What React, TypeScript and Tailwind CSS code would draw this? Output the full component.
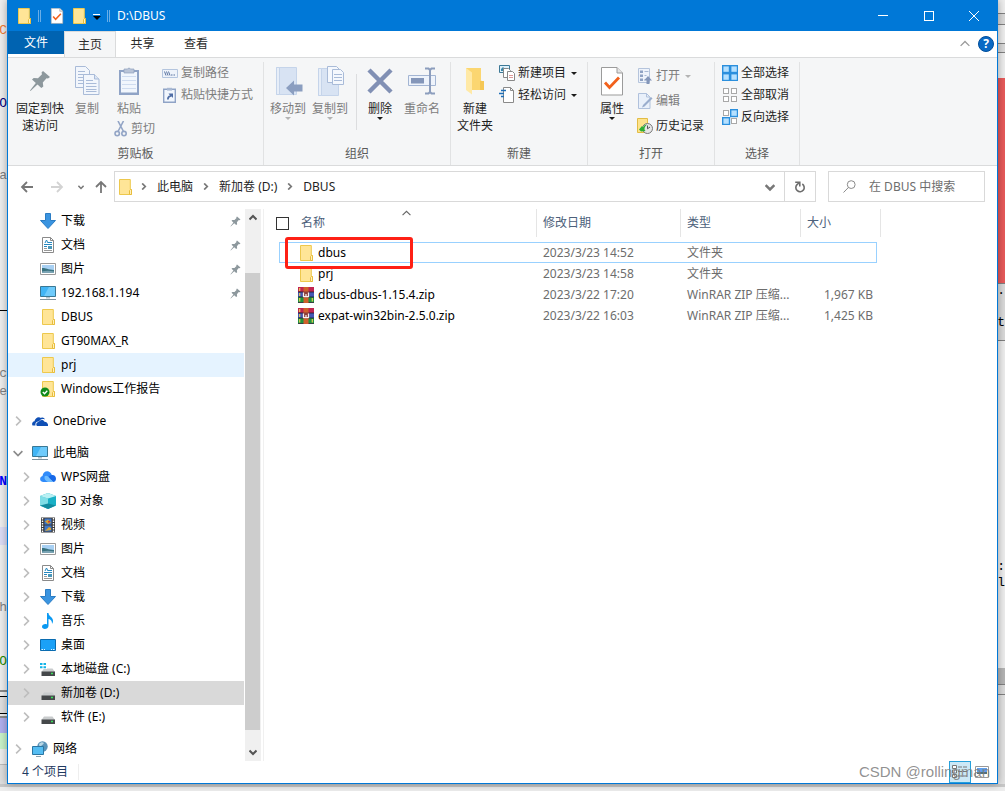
import React from "react";
import clsx from "clsx";

type IconProps = { className?: string };

/* ---------- icons ---------- */

const FolderIcon = ({ className = "w-4 h-4" }: IconProps) => (
    <svg viewBox="0 0 16 16" className={clsx("shrink-0", className)}>
        <path d="M2.5.5h10.800v10h1v5H2.500z" fill="#ffe597" stroke="#edc84d" />
        <path d="M12.500 15.500v-4l1-1h1v5z" fill="#fff0bd" stroke="#e8bd3c" />
    </svg>
);

const CheckDocIcon = ({ className = "w-6 h-[29px]" }: IconProps) => (
    <svg viewBox="0 0 24 29" className={clsx("shrink-0", className)}>
        <path d="M1.500.5h15.500l5.500 5.500v22h-21z" fill="#fff" stroke="#9b9b9b" />
        <path d="M17 .5v5.500h5.500" fill="#e4e4e4" stroke="#9b9b9b" />
        <path d="M5 15.500l4.500 5L19 10.500" fill="none" stroke="#f2611c" strokeWidth="2.800" />
    </svg>
);

const PinIcon = ({ className = "w-[22px] h-[22px]" }: IconProps) => (
    <svg viewBox="0 0 22 22" className={clsx("shrink-0", className)} fill="#8d989d">
        <path d="M14 1l7 6-2 1.500-1.500-.3-3.700 4.300.5 4-2 1.500L8.500 14.500 1.500 21 1 20.500l5.800-7.500L3 9.500 4.700 8l4.300.2 4-4L12.500 2.500z" />
    </svg>
);

const CopyIcon = () => (
    <svg viewBox="0 0 26 30" className="w-[26px] h-[30px]" fill="#f2f6fc" stroke="#a9bbd8">
        <path d="M1.500.5h10l4 4v17h-14z" />
        <path d="M4 5.500h7M4 8.500h9M4 11.500h9M4 14.500h9M4 17.500h9" />
        <path d="M9.500 8.500h11l4.500 4.500v15.500H9.500z" />
        <path d="M20.500 8.500V13H25" fill="#dce6f4" />
        <path d="M12 14.500h7M12 17.500h10.500M12 20.500h10.500M12 23.500h10.500M12 25.500h10.500" />
    </svg>
);

const PasteIcon = () => (
    <svg viewBox="0 0 22 30" className="w-[22px] h-[30px]">
        <path d="M1 4h20v25H1z" fill="#8fa3c6" />
        <path d="M3 6h16v20.500H3z" fill="#f1f6fd" />
        <path d="M4 10.500h14M4 14.500h14M4 18.500h14M4 22.500h14" stroke="#cfdcf0" />
        <path d="M6 3h3.500a1.700 1.700 0 013 0H16v4H6z" fill="#b9c4d8" stroke="#8fa0bd" strokeWidth=".7" />
    </svg>
);

const CutIcon = () => (
    <svg viewBox="0 0 14 16" className="w-[14px] h-4" fill="none" stroke="#93a5c6" strokeWidth="1.600">
        <path d="M4 0l5.500 10.500M9.500 0L4 10.500" />
        <circle cx="3.200" cy="12.600" r="2.200" />
        <circle cx="10" cy="12.600" r="2.200" />
    </svg>
);

const CopyPathIcon = () => (
    <svg viewBox="0 0 16 16" className="w-4 h-4">
        <path d="M.5 4.500h15v8H.5z" fill="#eef3fa" stroke="#b4c5de" />
        <path d="M2.500 6.500l1.500 4M4.500 6.500l1.500 4M6.500 6.500l1.500 4M9 10h1.500M11.500 10H13" stroke="#5872a0" />
    </svg>
);

const PasteShortcutIcon = () => (
    <svg viewBox="0 0 16 16" className="w-4 h-4">
        <path d="M1.700 2.200h11.600v13H1.700z" fill="#f1f6fd" stroke="#8fa3c6" strokeWidth="1.400" />
        <path d="M5 .8h5v2.800H5z" fill="#a9b9d3" />
        <path d="M5 12.500c0-2.500 1-3.800 3-4l-1.500-2h4.500v4.500l-1.300-1.500C7.500 9.800 6.800 11 6.800 12.500z" fill="#4f6da5" />
    </svg>
);

const MoveToIcon = () => (
    <svg viewBox="-2 0 30 30" className="w-[30px] h-[30px]">
        <path d="M1.500 1.500h20v27h-20z" fill="#d8e3f3" stroke="#c5d4ea" />
        <path d="M1.500 1.500h3v27h-3z" fill="#e7eef8" stroke="#c5d4ea" />
        <path d="M11 22l8-7.500v4h8.500v7H19v4z" fill="#8b9ec0" />
    </svg>
);

const CopyToIcon = () => (
    <svg viewBox="-2 0 30 31" className="w-[30px] h-[31px]">
        <path d="M1.500 2.500h20v27h-20z" fill="#d8e3f3" stroke="#c5d4ea" />
        <path d="M1.500 2.500h3v27h-3z" fill="#e7eef8" stroke="#c5d4ea" />
        <g fill="#f5f8fd" stroke="#a9bbd8">
            <path d="M10.500.5h9l3 3v13h-12z" />
            <path d="M15.500 3.500h8l3 3v12h-11z" />
            <path d="M17 8.500h8M17 11.500h8M17 14.500h8" />
        </g>
    </svg>
);

const DeleteIcon = () => (
    <svg viewBox="0 0 28 28" className="w-7 h-7" stroke="#8190b4" strokeWidth="4.500">
        <path d="M3 3l22 22M25 3L3 25" />
    </svg>
);

const RenameIcon = () => (
    <svg viewBox="0 0 30 28" className="w-[30px] h-7">
        <path d="M1.500 8.500h27v10h-27z" fill="#eef3fb" stroke="#a3b5d3" />
        <path d="M4 11h13v5.500H4z" fill="#8496b9" />
        <path d="M18 1.500h3.500l1.500 1.500 1.500-1.500H28M18 26.500h3.500l1.500-1.500 1.500 1.500H28M23 3v22" fill="none" stroke="#8c9dbd" strokeWidth="2" />
    </svg>
);

const NewFolderIcon = () => (
    <svg viewBox="0 0 20 28" className="w-5 h-7">
        <path d="M1 1h15v12.500l3 1.500v8H1z" fill="#fbd671" />
        <path d="M1 1l6 4.500v22L1 23z" fill="#ffe9a6" />
        <path d="M15 14h4v9h-4z" fill="#f5c755" />
    </svg>
);

const NewItemIcon = () => (
    <svg viewBox="0 0 16 16" className="w-4 h-4">
        <path d="M.5.500h10v7H.5z" fill="#dff1fb" stroke="#3c7896" />
        <path d="M2 4l2-2 2 2 2-1v3H2z" fill="#3987a8" />
        <path d="M4.500 3.500h5l2 2v7h-7z" fill="#fff" stroke="#888" />
        <path d="M8.500 6.500h5l2 2v7h-7z" fill="#fff" stroke="#888" />
        <path d="M10 10.500h4M10 12.500h4" stroke="#d99" />
    </svg>
);

const EasyAccessIcon = () => (
    <svg viewBox="0 0 16 16" className="w-4 h-4">
        <path d="M4.500.5h7l3 3v12h-10z" fill="#fff" stroke="#8a8a8a" />
        <path d="M11.500.5v3h3" fill="none" stroke="#8a8a8a" />
        <path d="M2 3.500h5M0 6.500h5M2 9.500h3" stroke="#1f6fb8" strokeWidth="1.400" />
    </svg>
);

const OpenIcon = () => (
    <svg viewBox="0 0 16 16" className="w-4 h-4">
        <path d="M1.500.500h11v14h-11z" fill="#eef3fb" stroke="#b5c4dc" />
        <path d="M3 2.500h3v2.500H3zM3 6.500h3V9H3zM3 10.500h3V13H3z" fill="#8fa2c3" />
        <path d="M7.500 3.500h4M7.500 7.500h2M7.500 11.500h1" stroke="#a9b9d3" />
        <path d="M11 8l4 4.500h-2.500V16h-3v-3.500H7z" fill="#8496b9" />
    </svg>
);

const EditIcon = () => (
    <svg viewBox="0 0 16 16" className="w-4 h-4">
        <path d="M1.500.5h8l3.500 3.500v11.500H1.500z" fill="#e9f0fa" stroke="#b0c1dc" />
        <path d="M9.500.5v3.500H13" fill="none" stroke="#b0c1dc" />
        <path d="M14 4l1.500 1.500-8 8-2.500 1 1-2.500z" fill="#9aadcd" />
    </svg>
);

const HistoryIcon = () => (
    <svg viewBox="0 0 16 16" className="w-4 h-4">
        <path d="M.5.500h10v14H.5z" fill="#fde38c" stroke="#e2bc45" />
        <circle cx="10.500" cy="10.500" r="5" fill="#e6e6e6" stroke="#7a7a7a" />
        <path d="M10.500 7.500v3.300l2.500-1.800" fill="none" stroke="#555" />
        <path d="M2 11.500l3-3.500 1 1.300c1-1.800 2-2.600 4-2.800-1.800 1.500-2.500 3-2.500 5l1 1.500-4.500.5z" fill="#2eaf35" />
    </svg>
);

const SelectIcon = ({ on }: { on: boolean[] }) => (
    <svg viewBox="0 0 16 16" className="w-4 h-4">
        {on.map((o, i) => (
            <rect
                key={i}
                x={(i % 2) * 8 + (o ? 0.7 : 1.5)}
                y={Math.floor(i / 2) * 8 + (o ? 0.7 : 1.5)}
                width={o ? 6.8 : 5}
                height={o ? 6.8 : 5}
                fill={o ? "#b5e0ff" : "#fff"}
                stroke={o ? "#2b8fdd" : "#a8a8a8"}
                strokeWidth={o ? 1.4 : 1}
            />
        ))}
    </svg>
);

const DownloadIcon = () => (
    <svg viewBox="0 0 16 16" className="w-4 h-4">
        <path d="M5.500.5h5v7h5L8 15.500.5 7.500h5z" fill="#3a94e0" stroke="#2a7cc4" />
    </svg>
);

const DocIcon = () => (
    <svg viewBox="0 0 16 16" className="w-4 h-4">
        <path d="M2.500.5h8l3 3v12h-11z" fill="#fff" stroke="#8a8a8a" />
        <path d="M10.500.5v3h3" fill="none" stroke="#8a8a8a" />
        <path d="M5 6l1.500-3L8 6M4 7.500h8M4 9.500h3M8 5.500h4" fill="none" stroke="#2487c0" />
        <path d="M4 11.500h3M4 13.500h8" stroke="#999" />
        <path d="M8 9h4v3H8z" fill="#4a96b8" />
    </svg>
);

const PictureIcon = () => (
    <svg viewBox="0 0 16 16" className="w-4 h-4">
        <path d="M.5 2.500h15v11H.5z" fill="#fff" stroke="#9a9a9a" />
        <path d="M2 4h12v8H2z" fill="#a8d0f3" />
        <path d="M2 7c3-.5 5 1.500 12 2v3H2z" fill="#3a7380" />
        <path d="M2 10.500c4-1 8-.8 12 0V12H2z" fill="#7ba4b4" />
    </svg>
);

const ComputerIcon = () => (
    <svg viewBox="0 0 16 16" className="w-4 h-4">
        <path d="M.5 1.500h15v10H.5z" fill="#41b5f5" stroke="#3a7894" />
        <path d="M9 2h6v9H4z" fill="#6fcbfb" />
        <path d="M6 12h4v1.500H6z" fill="#b6c4cb" />
        <path d="M0 14.500h16" stroke="#7d929d" />
    </svg>
);

const SyncedFolderIcon = () => (
    <svg viewBox="0 0 16 16" className="w-4 h-4">
        <path d="M2.500.5h10.800v10h1v5H2.500z" fill="#ffe597" stroke="#edc84d" />
        <path d="M12.500 15.500v-4l1-1h1v5z" fill="#fff0bd" stroke="#e8bd3c" />
        <circle cx="5" cy="11" r="4.500" fill="#118a1a" />
        <path d="M2.800 11l1.700 1.700 2.800-3" fill="none" stroke="#fff" strokeWidth="1.300" />
    </svg>
);

const OneDriveIcon = () => (
    <svg viewBox="0 0 16 16" className="w-4 h-4" fill="#0f4fb5">
        <path d="M.5 12.500c-1-2 0-4 2-4.300C3 5 6.500 3 9 5c1.500-1 3.500 0 4 1.500-3-1-5 0-6 2C4.500 8.200 3 10 3.500 12.500z" />
        <path d="M5 13c-1.500-1.500-.5-4 1.800-4 .7-2.500 4.700-3 5.700-.2 2 0 3 1.200 3.500 2.700V13z" />
    </svg>
);

const WpsCloudIcon = () => (
    <svg viewBox="0 0 16 16" className="w-4 h-4">
        <path d="M3 13C-1 12.500-.5 7.500 2.500 7 3 1.500 10 .5 11.800 6L10 13z" fill="#2f8bfa" />
        <path d="M10.500 6.500c3-1.500 5.500.5 5.500 3.200 0 2-1.200 3.300-3 3.300L8 8.500c.5-1 1.300-1.600 2.500-2z" fill="#1668e8" />
        <path d="M4.500 7.500C6 6 8 7 9 8.500l4 4.500H8C5.500 12 4 10 4.500 7.500z" fill="#6dbcff" />
    </svg>
);

const CubeIcon = () => (
    <svg viewBox="0 0 16 16" className="w-4 h-4">
        <path d="M0 3l8-3 8 3v9.500L8 16l-8-3.500z" fill="#19b0c6" />
        <path d="M0 3l8 2.500V16l-8-3.500z" fill="#7fdde6" />
        <path d="M0 3l8-3 8 3-8 2.500z" fill="#b9f0f3" />
        <path d="M0 12.500L8 10.500l8 2L8 16z" fill="#128a9e" />
    </svg>
);

const VideoIcon = () => (
    <svg viewBox="0 0 16 16" className="w-4 h-4">
        <path d="M1 .5h14v15H1z" fill="#3a3a3a" />
        <path d="M2.500 1v14M13.500 1v14" stroke="#fff" strokeWidth="1.400" strokeDasharray="1.500 1" />
        <path d="M4.500 1.500h7v6h-7zM4.500 8.500h7v6h-7z" fill="#3e76c9" />
        <path d="M5 4.500l3-2 3 3-3 1.500zM5 14l4-4 2 1v2z" fill="#d7a437" />
        <path d="M8 4h2v1.500H8z" fill="#c93a2f" />
    </svg>
);

const MusicIcon = () => (
    <svg viewBox="0 0 16 16" className="w-4 h-4" fill="#0a99f2">
        <path d="M7 0h1.500c0 3.500 5 4 4.500 8.500-.2 1.300-.7 2-1 2.500.2-3-1-4.500-3.500-5V13c0 3.500-6.500 4-6.500.8 0-2.300 3-3.300 5-2.300z" />
    </svg>
);

const DesktopIcon = () => (
    <svg viewBox="0 0 16 16" className="w-4 h-4">
        <path d="M.5 2.500h15v11H.5z" fill="#1ba1f7" stroke="#0a6cb0" />
        <path d="M1.500 12.500h1.500M4 12.500h1M11 12.500h1M13 12.500h1.500" stroke="#e6f6ff" />
    </svg>
);

const DriveIcon = ({ system }: { system?: boolean }) => (
    <svg viewBox="0 0 16 16" className="w-4 h-4">
        <path d="M4 7.500h8.500L15 11H1.500z" fill="#c9cccd" />
        <path d="M1.500 10.500H15V15H1.500z" fill="#45484a" />
        <path d="M11 12.500h2" stroke="#39e05a" strokeWidth="1.400" />
        {system && (
            <>
                <path d="M0 1h7v7H0z" fill="#fff" />
                <path d="M0 2h2.500v2H0zM3.500 2H6v2H3.500zM0 5.200h2.500v2H0zM3.500 5.200H6v2H3.500z" fill="#12b4e8" />
            </>
        )}
    </svg>
);

const NetworkIcon = () => (
    <svg viewBox="0 0 16 16" className="w-4 h-4">
        <circle cx="10.500" cy="5.500" r="5.200" fill="#5a93b8" />
        <path d="M7 3c2-2.500 4-2 5-1-1 2-3 2-3 4-1.500 0-2-1.500-2-3z" fill="#b9d7e5" />
        <path d="M.5 5.500h11v8H.5z" fill="#55bdf2" stroke="#2b76a3" />
        <path d="M4 15.500h5" stroke="#8aa1ad" />
    </svg>
);

const RarIcon = () => (
    <svg viewBox="0 0 16 16" className="w-4 h-4 shrink-0">
        <path d="M0 0h16v5H0z" fill="#c22450" />
        <path d="M0 5h16v5H0z" fill="#4458b4" />
        <path d="M0 10h16v5.500H0z" fill="#1f9440" />
        <path d="M0 5h16M0 10h16M0 15.500h16" stroke="#1d1d2c" strokeWidth=".8" />
        <path d="M5.500 0h5v5.500h-5zM5.500 10h5v6h-5z" fill="#d0602c" />
        <path d="M1.700 1v3M1.700 6v3M1.700 11v3.500M14.300 11v3.500" stroke="#eccb55" strokeWidth="1.200" />
        <path d="M4.800 4.500h6.400v6H4.800z" fill="#8e3f3a" />
        <path d="M5.500 10V5.500M8 7v3M10.500 10V5.500M5.500 9.700h5" fill="none" stroke="#f8f4f2" strokeWidth="1.200" />
    </svg>
);

type Dir = "right" | "down" | "up";
const Chevron = ({ dir, size = 8, color = "#777", weight = 1.5 }: { dir: Dir; size?: number; color?: string; weight?: number }) => {
    const d = { right: "M2.500 0.500L6 4 2.500 7.500", down: "M0.500 2.500L4 6 7.500 2.500", up: "M0.500 5.500L4 2 7.500 5.500" }[dir];
    return (
        <svg viewBox="0 0 8 8" width={size} height={size} className="shrink-0" fill="none" stroke={color} strokeWidth={weight}>
            <path d={d} />
        </svg>
    );
};

const Caret = ({ muted }: { muted?: boolean }) => (
    <svg viewBox="0 0 6 3" className="w-[6px] h-[3px] shrink-0">
        <path d="M0 0h6L3 3z" fill={muted ? "#b3b3b3" : "#1b1b1b"} />
    </svg>
);

const Arrow = ({ dir, color = "#777777" }: { dir: "left" | "right" | "up"; color?: string }) => {
    const d = {
        left: "M13 7H2M7 2L2 7l5 5",
        right: "M1 7h11M7 2l5 5-5 5",
        up: "M7 13V2M2 7l5-5 5 5",
    }[dir];
    return (
        <svg viewBox="0 0 14 14" className="w-[14px] h-[14px]" fill="none" stroke={color} strokeWidth="1.800">
            <path d={d} />
        </svg>
    );
};

/* ---------- ribbon ---------- */

type ButtonProps = {
    icon: React.ReactNode;
    label: string;
    muted?: boolean;
    caret?: boolean;
    width?: string;
};

const TallButton = ({ icon, label, muted, caret, width = "w-[42px]" }: ButtonProps) => (
    <button className={clsx("flex flex-col items-center leading-[17px]", width, muted ? "text-[#7d7d7d]" : "text-[#1e1e1e]")}>
        <span className="flex h-[38px] items-center">{icon}</span>
        <span className="whitespace-pre">{label}</span>
        {caret && <Caret muted={muted} />}
    </button>
);

const SmallButton = ({ icon, label, muted, caret }: ButtonProps) => (
    <button className={clsx("flex items-center gap-[3px] h-[22px] whitespace-nowrap", muted ? "text-[#7d7d7d]" : "text-[#1e1e1e]")}>
        {icon}
        <span>{label}</span>
        {caret && <span className="pl-[2px]"><Caret muted={muted} /></span>}
    </button>
);

const Group = ({ title, className, children }: { title: string; className?: string; children: React.ReactNode }) => (
    <section className={clsx("flex flex-col border-r border-[#e1e2e3]", className)}>
        <div className="flex h-[83px]">{children}</div>
        <h2 className="h-5 text-center leading-[18px] text-[#5a5a5a]">{title}</h2>
    </section>
);

const Ribbon = () => (
    <div className="flex border-y border-[#dadbdc] bg-[#f5f6f7] pt-1">
        <Group title="剪贴板" className="w-[256px]">
            <TallButton icon={<PinIcon />} label={"固定到快\n速访问"} width="w-16" />
            <TallButton icon={<CopyIcon />} label="复制" muted width="w-[30px]" />
            <div className="flex flex-col items-start pl-[6px]">
                <TallButton icon={<PasteIcon />} label="粘贴" muted width="w-[42px]" />
                <div className="pl-[6px] pt-px"><SmallButton icon={<CutIcon />} label="剪切" muted /></div>
            </div>
            <div className="flex flex-col items-start pl-[7px]">
                <SmallButton icon={<CopyPathIcon />} label="复制路径" muted />
                <SmallButton icon={<PasteShortcutIcon />} label="粘贴快捷方式" muted />
            </div>
        </Group>
        <Group title="组织" className="w-[187px]">
            <div className="flex pl-[3px]">
                <TallButton icon={<MoveToIcon />} label="移动到" muted caret />
                <TallButton icon={<CopyToIcon />} label="复制到" muted caret />
                <div className="mx-[5px] mt-3 h-14 w-px bg-[#dcdddf]" />
                <TallButton icon={<DeleteIcon />} label="删除" caret width="w-9" />
                <TallButton icon={<RenameIcon />} label="重命名" muted width="w-12" />
            </div>
        </Group>
        <Group title="新建" className="w-[137px]">
            <TallButton icon={<NewFolderIcon />} label={"新建\n文件夹"} width="w-12" />
            <div className="flex flex-col">
                <SmallButton icon={<NewItemIcon />} label="新建项目" caret />
                <SmallButton icon={<EasyAccessIcon />} label="轻松访问" caret />
            </div>
        </Group>
        <Group title="打开" className="w-[127px]">
            <TallButton icon={<CheckDocIcon />} label="属性" caret width="w-12" />
            <div className="flex flex-col gap-[3px] pl-px pt-[3px]">
                <SmallButton icon={<OpenIcon />} label="打开" muted caret />
                <SmallButton icon={<EditIcon />} label="编辑" muted />
                <SmallButton icon={<HistoryIcon />} label="历史记录" />
            </div>
        </Group>
        <Group title="选择" className="w-[85px]">
            <div className="flex flex-col pl-[7px]">
                <SmallButton icon={<SelectIcon on={[true, true, true, true]} />} label="全部选择" />
                <SmallButton icon={<SelectIcon on={[false, false, false, false]} />} label="全部取消" />
                <SmallButton icon={<SelectIcon on={[false, true, true, false]} />} label="反向选择" />
            </div>
        </Group>
    </div>
);

/* ---------- title bar, tabs, address bar ---------- */

const TitleBar = () => (
    <header className="flex h-[31px] items-center bg-[#0078d7] pl-2 text-white">
        <FolderIcon className="h-4 w-4" />
        <span className="ml-[6px] h-3 w-[3px] border-x border-[#69aee8]" />
        <button className="ml-[6px] flex w-5 justify-center" aria-label="属性"><CheckDocIcon className="h-4 w-[14px]" /></button>
        <button className="ml-1 flex w-4" aria-label="新建文件夹"><FolderIcon className="h-4 w-4" /></button>
        <button className="ml-[6px] flex w-[7px] flex-col items-center gap-px pt-[2px]" aria-label="自定义快速访问工具栏">
            <span className="h-px w-[7px] bg-white" />
            <svg viewBox="0 0 8 4" className="h-1 w-2"><path d="M0 0h8L4 4z" fill="#000" /></svg>
        </button>
        <span className="ml-[7px] h-3 w-[3px] border-x border-[#69aee8]" />
        <h1 className="ml-[7px] flex-1">D:\DBUS</h1>
        <button className="flex h-full w-[46px] items-center justify-center" aria-label="最小化"><span className="h-px w-[10px] bg-white" /></button>
        <button className="flex h-full w-[45px] items-center justify-center" aria-label="最大化"><span className="h-[10px] w-[10px] border border-white" /></button>
        <button className="flex h-full w-[46px] items-center justify-center" aria-label="关闭">
            <svg viewBox="0 0 10 10" className="h-[10px] w-[10px]" stroke="#fff"><path d="M0 0l10 10M10 0L0 10" /></svg>
        </button>
    </header>
);

const Tabs = () => (
    <nav className="flex h-[26px] text-[#2b2b2b]">
        <button className="h-[23px] w-14 bg-[#0063b1] text-white">文件</button>
        <button className="-mb-px h-[27px] w-[52px] border border-b-0 border-[#dadbdc] bg-[#f5f6f7]">主页</button>
        <button className="w-[53px]">共享</button>
        <button className="w-[54px]">查看</button>
        <div className="ml-auto flex items-center gap-2 pr-[3px]">
            <button aria-label="最小化功能区"><Chevron dir="up" size={10} color="#999" weight={1} /></button>
            <button aria-label="帮助" className="flex h-4 w-4 items-center justify-center rounded-full border border-[#004e9b] bg-[#0a69c4] font-bold text-white">?</button>
        </div>
    </nav>
);

const AddressBar = () => (
    <div className="flex items-center px-3 pt-[5px] pb-[7px]">
        <button aria-label="后退"><Arrow dir="left" /></button>
        <button className="ml-4" aria-label="前进"><Arrow dir="right" color="#d3d3d3" /></button>
        <button className="ml-[14px]" aria-label="最近浏览的位置"><Chevron dir="down" size={6} color="#777" weight={2} /></button>
        <button className="ml-[10px]" aria-label="上移"><Arrow dir="up" /></button>
        <div className="ml-[6px] flex h-[31px] flex-1 border border-[#d9d9d9] text-[#1e1e1e]">
            <ol className="flex flex-1 items-center gap-[10px] pl-[2px]">
                <li className="flex items-center gap-[7px]"><FolderIcon className="h-4 w-4" /><Chevron dir="right" size={7} weight={2} /></li>
                <li className="flex items-center gap-[9px]"><a href="#pc">此电脑</a><Chevron dir="right" size={7} weight={2} /></li>
                <li className="flex items-center gap-[9px]"><a href="#d">新加卷 (D:)</a><Chevron dir="right" size={7} weight={2} /></li>
                <li><a href="#dbus">DBUS</a></li>
            </ol>
            <button className="flex w-7 items-center justify-center" aria-label="以前的位置"><Chevron dir="down" size={10} color="#777" weight={2} /></button>
            <button className="flex w-[31px] items-center justify-center border-l border-[#d9d9d9]" aria-label="刷新">
                <svg viewBox="0 0 12 12" className="h-3 w-3" fill="none" stroke="#6d6d6d" strokeWidth="1.600">
                    <path d="M8.300 3A4.200 4.200 0 113 3.600L5.500 1.500M1.200 1.300h4.600v4.200" />
                </svg>
            </button>
        </div>
        <label className="ml-3 flex h-[31px] w-[157px] items-center gap-[13px] border border-[#d9d9d9] pl-[14px]">
            <svg viewBox="0 0 13 13" className="h-[13px] w-[13px] shrink-0" fill="none" stroke="#8a8a8a">
                <circle cx="8.200" cy="4.600" r="3.900" />
                <path d="M5.400 7.500L.5 12.500" />
            </svg>
            <input className="w-full min-w-0 outline-none placeholder:text-[#6d6d6d]" placeholder="在 DBUS 中搜索" aria-label="搜索" />
        </label>
    </div>
);

/* ---------- navigation pane ---------- */

type NavItem = {
    label: string;
    icon: React.ReactNode;
    depth?: 0 | 1;
    arrow?: Dir;
    pinned?: boolean;
    state?: "hover" | "selected";
};

const navSections: NavItem[][] = [
    [
        { label: "下载", icon: <DownloadIcon />, pinned: true },
        { label: "文档", icon: <DocIcon />, pinned: true },
        { label: "图片", icon: <PictureIcon />, pinned: true },
        { label: "192.168.1.194", icon: <ComputerIcon />, pinned: true },
        { label: "DBUS", icon: <FolderIcon /> },
        { label: "GT90MAX_R", icon: <FolderIcon /> },
        { label: "prj", icon: <FolderIcon />, state: "hover" },
        { label: "Windows工作报告", icon: <SyncedFolderIcon /> },
    ],
    [{ label: "OneDrive", icon: <OneDriveIcon />, depth: 0, arrow: "right" }],
    [
        { label: "此电脑", icon: <ComputerIcon />, depth: 0, arrow: "down" },
        { label: "WPS网盘", icon: <WpsCloudIcon />, arrow: "right" },
        { label: "3D 对象", icon: <CubeIcon />, arrow: "right" },
        { label: "视频", icon: <VideoIcon />, arrow: "right" },
        { label: "图片", icon: <PictureIcon />, arrow: "right" },
        { label: "文档", icon: <DocIcon />, arrow: "right" },
        { label: "下载", icon: <DownloadIcon />, arrow: "right" },
        { label: "音乐", icon: <MusicIcon />, arrow: "right" },
        { label: "桌面", icon: <DesktopIcon />, arrow: "right" },
        { label: "本地磁盘 (C:)", icon: <DriveIcon system />, arrow: "right" },
        { label: "新加卷 (D:)", icon: <DriveIcon />, arrow: "right", state: "selected" },
        { label: "软件 (E:)", icon: <DriveIcon />, arrow: "right" },
    ],
    [{ label: "网络", icon: <NetworkIcon />, depth: 0, arrow: "right" }],
];

const NavRow = ({ label, icon, depth = 1, arrow, pinned, state }: NavItem) => (
    <a
        href="#nav"
        className={clsx(
            "flex h-6 items-center pr-[3px]",
            depth === 0 ? "pl-[5px]" : "pl-[13px]",
            state === "hover" && "bg-[#e5f3ff]",
            state === "selected" && "bg-[#d9d9d9]"
        )}
    >
        <span className="flex w-[19px] items-center">
            {arrow && <Chevron dir={arrow} size={10} color={arrow === "down" ? "#8a8a8a" : "#bdbdbd"} weight={1.3} />}
        </span>
        {icon}
        <span className="flex-1 pl-[5px]">{label}</span>
        {pinned && <PinIcon className="h-[11px] w-[11px]" />}
    </a>
);

const NavPane = () => (
    <aside className="flex border-r border-[#f0f0f0] pr-[2px] text-black">
        <div className="flex w-[236px] flex-col gap-2">
            {navSections.map((items, i) => (
                <div key={i}>
                    {items.map((item) => <NavRow key={item.label} {...item} />)}
                </div>
            ))}
        </div>
        <div className="ml-px flex w-4 flex-col bg-[#f0f0f0]">
            <button className="flex h-[18px] items-center justify-center" aria-label="向上滚动"><Chevron dir="up" size={8} color="#555" weight={2} /></button>
            <div className="flex flex-1 flex-col pt-[46px] pb-[13px]"><div className="w-[15px] flex-1 bg-[#cdcdcd]" /></div>
            <button className="flex h-[18px] items-center justify-center" aria-label="向下滚动"><Chevron dir="down" size={8} color="#555" weight={2} /></button>
        </div>
    </aside>
);

/* ---------- file list ---------- */

const files = [
    { name: "dbus", date: "2023/3/23 14:52", type: "文件夹", size: "", marked: true },
    { name: "prj", date: "2023/3/23 14:58", type: "文件夹", size: "" },
    { name: "dbus-dbus-1.15.4.zip", date: "2023/3/22 17:20", type: "WinRAR ZIP 压缩...", size: "1,967 KB" },
    { name: "expat-win32bin-2.5.0.zip", date: "2023/3/22 16:03", type: "WinRAR ZIP 压缩...", size: "1,425 KB" },
];

const FileList = () => (
    <main className="flex-1 pl-[15px]">
        <table className="w-[598px] table-fixed border-collapse text-left">
            <thead className="text-[#4c607a]">
                <tr className="h-[33px] align-top">
                    <th className="w-[258px] font-normal">
                        <div className="-ml-[3px] flex h-7 items-center gap-3 border-r border-[#e5e5e5]">
                            <input type="checkbox" aria-label="全选" className="h-[13px] w-[13px] appearance-none border border-[#333] bg-white" />
                            <span className="w-[89px]">名称</span>
                            <span className="self-start"><Chevron dir="up" size={9} color="#666" weight={1} /></span>
                        </div>
                    </th>
                    <th className="w-[144px] font-normal"><div className="h-7 border-r border-[#e5e5e5] pl-[6px] leading-7">修改日期</div></th>
                    <th className="w-[120px] font-normal"><div className="h-7 border-r border-[#e5e5e5] pl-[6px] leading-7">类型</div></th>
                    <th className="w-[76px] font-normal"><div className="h-7 w-20 border-r border-[#e5e5e5] pl-[6px] leading-7">大小</div></th>
                </tr>
            </thead>
            <tbody className="text-[#6d6d6d]">
                {files.map((f) => (
                    <tr key={f.name} className={clsx("h-[21px]", f.marked && "outline-1 -outline-offset-1 outline-[#99d1ff]")}>
                        <td className="relative">
                            <div className="flex items-center gap-1 pl-[19px] text-black">
                                {f.name.endsWith(".zip") ? <RarIcon /> : <FolderIcon />}
                                {f.name}
                            </div>
                            {f.marked && <div className="absolute -top-[5px] left-[6px] z-10 h-8 w-32 rounded-[3px] border-3 border-[#fe2015]" />}
                        </td>
                        <td className="pl-[6px]">{f.date}</td>
                        <td className="pl-[6px] whitespace-nowrap">{f.type}</td>
                        <td className="pr-1 text-right">{f.size}</td>
                    </tr>
                ))}
            </tbody>
        </table>
    </main>
);

const StatusBar = () => (
    <footer className="relative flex h-[22px] items-center pl-[14px] pr-2 text-[#1f3a5f]">
        <span className="border-r border-[#eee] pr-[10px]">4 个项目</span>
        <button className="ml-auto flex h-full w-[22px] items-center justify-center border border-[#26a0da] bg-[#cce8f6]" aria-label="详细信息">
            <svg viewBox="0 0 16 14" className="h-[14px] w-4" fill="none" stroke="#777">
                <path d="M.5.500h4v3h-4zM.5 5h4v3h-4zM.5 9.500h4v3h-4z" fill="#fff" />
                <path d="M6 2h4M11 2h4M6 6.500h4M11 6.500h4M6 11h4M11 11h4" />
            </svg>
        </button>
        <button className="ml-1" aria-label="大图标">
            <svg viewBox="0 0 14 12" className="h-3 w-[14px]">
                <path d="M.5.500h13v11H.5z" fill="#fff" stroke="#999" />
                <path d="M2 2h10v4H2z" fill="#5f9fee" />
                <path d="M2 6h10v2H2z" fill="#51707c" />
            </svg>
        </button>
        <span className="absolute right-[7px] bottom-0 font-['Liberation_Sans',sans-serif] text-[15px] leading-[22px] text-[#7d7d7d]/85">CSDN @rollingman</span>
    </footer>
);

/* ---------- windows behind, seen past the edges ---------- */

type Strip = { h: string; look?: string; text?: string };

const leftStrips: Strip[] = [
    { h: "h-6" },
    { h: "h-[14px]", look: "text-[#f07830]", text: "C" },
    { h: "h-[59px]" },
    { h: "h-[14px]", look: "text-[#000080]", text: "O" },
    { h: "h-[58px]" },
    { h: "h-[14px]", look: "text-[#808080]", text: "a" },
    { h: "h-32", look: "border-b border-black" },
    { h: "h-14" },
    { h: "h-[18px]", look: "text-[#808080]", text: "c" },
    { h: "h-[14px]", look: "text-[#808080]", text: "e" },
    { h: "h-[76px]" },
    { h: "h-[14px]", look: "font-bold text-[#0000ff]", text: "N" },
    { h: "h-[38px]" },
    { h: "h-[18px]", look: "bg-[#dcdcf5]" },
    { h: "h-14" },
    { h: "h-[14px]", look: "text-[#808080]", text: "h" },
    { h: "h-10" },
    { h: "h-[14px]", look: "text-[#228b00]", text: "O" },
    { h: "h-[23px]", look: "border-b-2 border-[#8a8a8a]" },
    { h: "h-[5px]", look: "border-b border-black" },
    { h: "h-[17px]", look: "bg-[#e0e0e0] border-b border-black" },
    { h: "h-1", look: "border-b-2 border-[#8a8a8a]" },
    { h: "h-[15px]", look: "bg-[#b0b0ee]" },
    { h: "h-4", look: "bg-[#c8f2c8]" },
    { h: "h-4", look: "border-b border-[#bbb]" },
    { h: "flex-1", look: "bg-[#dedede]" },
];

const rightStrips: Strip[] = [
    { h: "h-[14px]", look: "border-b border-[#808080]" },
    { h: "h-[11px]", look: "bg-[#dadada] border-b border-[#808080]" },
    { h: "h-[19px]", look: "border-b border-[#808080]" },
    { h: "h-[9px]", look: "bg-[#dadada] border-b border-[#808080]" },
    { h: "h-[25px]" },
    { h: "h-[205px]", look: "bg-[#e85a5a]" },
    { h: "h-[14px]", look: "bg-[#dadada] border-t border-[#808080] text-black", text: "." },
    { h: "h-[19px]", look: "bg-[#dadada]" },
    { h: "h-[14px]", look: "bg-[#dadada] text-black", text: "t" },
    { h: "h-[11px]", look: "bg-[#dadada] border-b border-[#808080]" },
    { h: "h-[219px]" },
    { h: "h-4", look: "text-black", text: ":" },
    { h: "h-[14px]", look: "text-black", text: "l" },
    { h: "h-[78px]" },
    { h: "h-4", look: "bg-[#b4b4b4]" },
    { h: "h-[11px]", look: "bg-[#dadada] border-y border-[#808080]" },
    { h: "flex-1", look: "bg-[#e2e2e2]" },
];

const Backdrop = ({ strips, width }: { strips: Strip[]; width: string }) => (
    <div aria-hidden className={clsx("flex flex-col overflow-hidden bg-[#eeeeee] font-['Liberation_Mono',monospace] text-[13px] leading-[14px]", width)}>
        {strips.map((s, i) => (
            <div key={i} className={clsx("flex shrink-0 justify-end", s.h, s.look)}>{s.text}</div>
        ))}
    </div>
);

export default function App() {
    return (
        <div className="flex min-h-screen flex-col bg-[#ededed] font-['Noto_Sans','Noto_Sans_CJK_SC',sans-serif] text-[12px] leading-4">
            <div className="flex flex-1">
                <Backdrop strips={leftStrips} width="w-[7px]" />
                <div className="z-10 flex min-w-0 flex-1 flex-col border border-t-0 border-[#0078d7] bg-white shadow-[0_0_8px_rgba(0,0,0,0.35)]">
                    <TitleBar />
                    <Tabs />
                    <Ribbon />
                    <AddressBar />
                    <div className="flex flex-1">
                        <NavPane />
                        <FileList />
                    </div>
                    <StatusBar />
                </div>
                <Backdrop strips={rightStrips} width="w-[7px]" />
            </div>
            <div className="h-[7px] border-t-3 border-[#c8c8c8]" />
        </div>
    );
}
